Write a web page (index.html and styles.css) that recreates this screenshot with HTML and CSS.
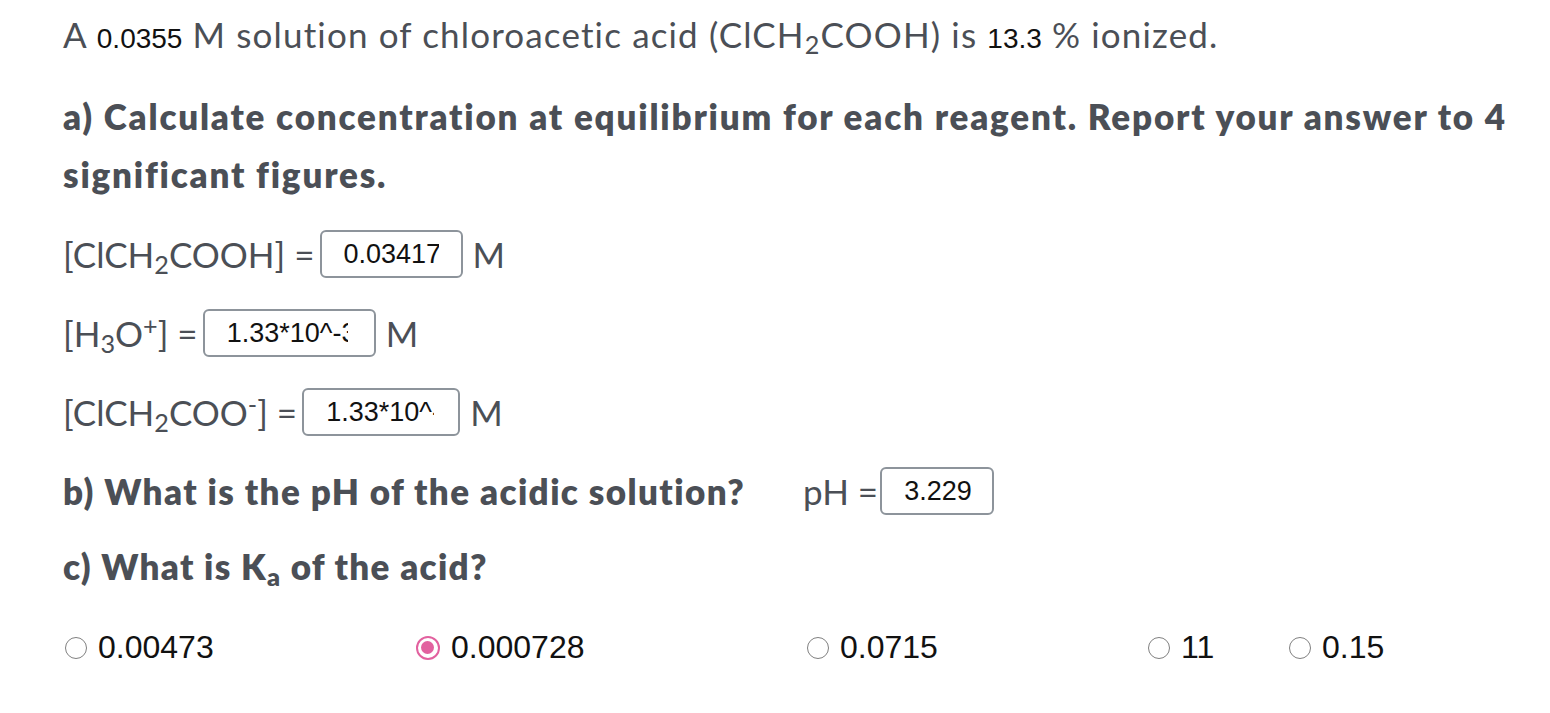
FILE: index.html
```html
<!DOCTYPE html>
<html>
<head>
<meta charset="utf-8">
<link rel="stylesheet" href="styles.css">
</head>
<body>
<main class="question">
  <p class="intro">A <span class="num">0.0355</span> M solution of chloroacetic acid (ClCH<sub>2</sub>COOH) is <span class="num">13.3</span> % ionized.</p>
  <p class="part">a) Calculate concentration at equilibrium for each reagent. Report your answer to 4 significant figures.</p>
  <div class="row row-first">
    <span class="label">[ClCH<sub>2</sub>COOH] =</span>
    <span class="field field-1"><span class="field-text">0.03417</span></span>
    <span class="unit">M</span>
  </div>
  <div class="row">
    <span class="label">[H<sub>3</sub>O<sup>+</sup>] =</span>
    <span class="field field-2"><span class="field-text">1.33*10^-3</span></span>
    <span class="unit">M</span>
  </div>
  <div class="row">
    <span class="label">[ClCH<sub>2</sub>COO<sup>-</sup>] =</span>
    <span class="field field-3"><span class="field-text">1.33*10^-3</span></span>
    <span class="unit">M</span>
  </div>
  <div class="row row-b">
    <span class="part-inline">b) What is the pH of the acidic solution?</span>
    <span class="label label-ph">pH =</span>
    <span class="field field-4"><span class="field-text">3.229</span></span>
  </div>
  <p class="part part-c">c) What is K<sub>a</sub> of the acid?</p>
  <div class="choices">
    <label class="choice"><span class="radio"></span><span class="choice-text">0.00473</span></label>
    <label class="choice"><span class="radio radio-on"></span><span class="choice-text">0.000728</span></label>
    <label class="choice"><span class="radio"></span><span class="choice-text">0.0715</span></label>
    <label class="choice"><span class="radio"></span><span class="choice-text">11</span></label>
    <label class="choice"><span class="radio"></span><span class="choice-text">0.15</span></label>
  </div>
</main>
</body>
</html>
```
FILE: styles.css
```css
html, body {
  margin: 0;
  padding: 0;
  background: #ffffff;
}

.question {
  padding: 8px 20px 0 63px;
  font-family: "Lato", "Noto Sans", sans-serif;
  font-size: 35px;
  letter-spacing: 1.15px;
  color: #4b4f56;
}

p {
  margin: 0;
}

sub, sup {
  font-size: 0.72em;
  line-height: 0;
}

sub {
  vertical-align: -0.25em;
}

sup {
  vertical-align: 0.48em;
}

.intro {
  line-height: 52px;
}

.num {
  font-family: "Liberation Sans", Arial, sans-serif;
  font-size: 28px;
  letter-spacing: 0;
  color: #111111;
}

.part {
  font-weight: 800;
  letter-spacing: 1.8px;
  line-height: 58px;
  margin-top: 22px;
}

.row {
  display: flex;
  align-items: center;
  height: 48px;
  margin-top: 31px;
}

.row-first {
  margin-top: 27px;
}

.label {
  letter-spacing: 0;
  margin-right: 5px;
}

.label-ph {
  margin-right: 2px;
}

.unit {
  margin-left: 10px;
}

.field {
  box-sizing: border-box;
  display: flex;
  align-items: center;
  height: 48px;
  border: 2px solid #8d949b;
  border-radius: 6px;
  padding: 0 0 0 22px;
  font-family: "Liberation Sans", Arial, sans-serif;
  font-size: 27px;
  letter-spacing: 0;
  color: #111111;
}

.field-text {
  display: block;
  overflow: hidden;
  white-space: nowrap;
}

.field-1 { width: 143px; }
.field-1 .field-text { width: 95px; }
.field-2 { width: 173px; }
.field-2 .field-text { width: 121px; }
.field-3 { width: 158px; }
.field-3 .field-text { width: 108px; }
.field-4 { width: 114px; }
.field-4 .field-text { width: 80px; }

.row-b {
  margin-top: 31px;
}

.part-inline {
  font-weight: 800;
  letter-spacing: 1.4px;
  margin-right: 58px;
}

.part-c {
  margin-top: 22px;
  letter-spacing: 1.3px;
}

.choices {
  display: grid;
  grid-template-columns: 351px 391px 341px 141px auto;
  margin-top: 34px;
  padding-left: 2px;
}

.choice {
  display: flex;
  align-items: center;
  font-family: "Liberation Sans", Arial, sans-serif;
  font-size: 32px;
  letter-spacing: 0;
  color: #111111;
}

.radio {
  box-sizing: border-box;
  width: 22px;
  height: 22px;
  border: 1.5px solid #808080;
  border-radius: 50%;
  margin-right: 11px;
  position: relative;
}

.radio-on {
  width: 24px;
  height: 24px;
  border: 2.5px solid #e2619f;
}

.radio-on::after {
  content: "";
  position: absolute;
  left: 3px;
  top: 3px;
  width: 13px;
  height: 13px;
  border-radius: 50%;
  background: #e2619f;
}
```
